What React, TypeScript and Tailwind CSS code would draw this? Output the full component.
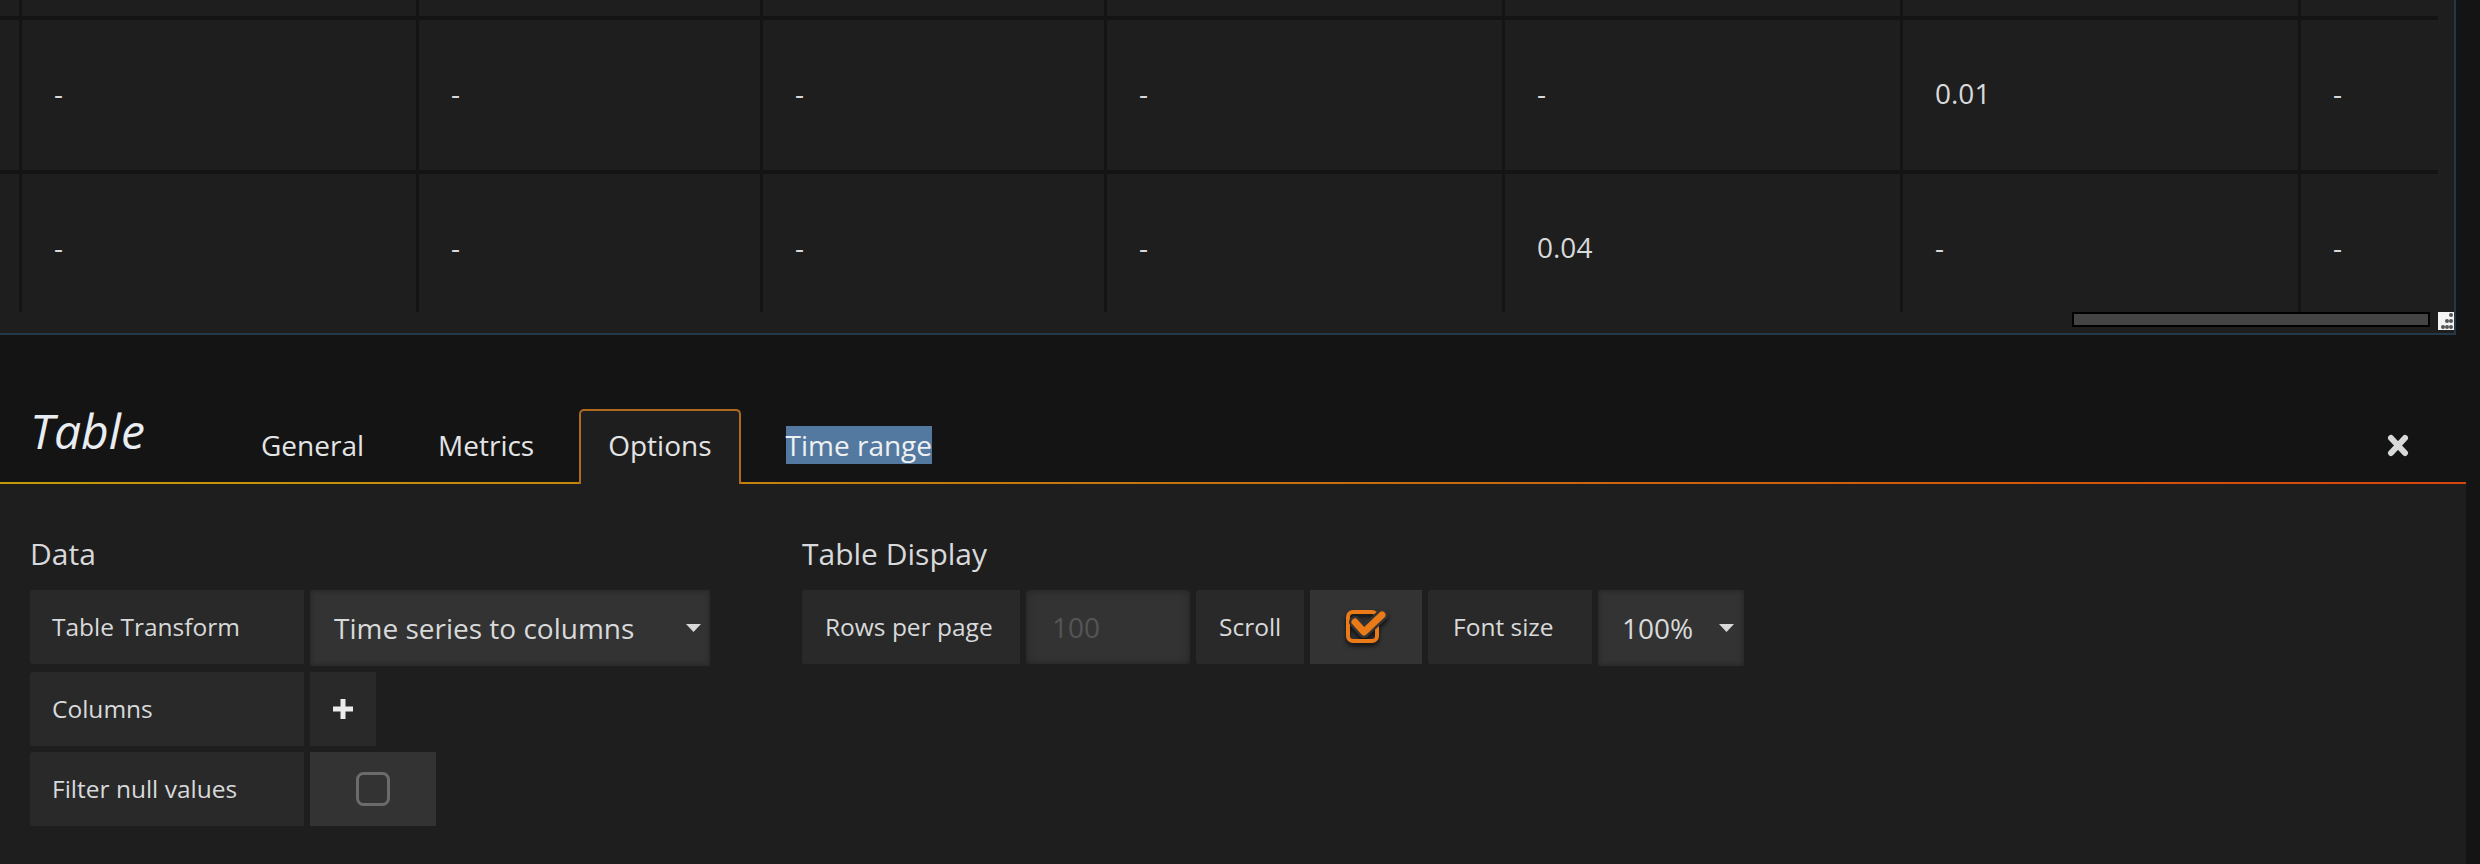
import React from "react";

const colWidths = [19, 397, 344, 344, 398, 398, 398, 140];

const rows = [
	["", "", "", "", "", "", "", ""],
	["", "-", "-", "-", "-", "-", "0.01", "-"],
	["", "-", "-", "-", "-", "0.04", "-", "-"],
];

function Caret() {
	return (
		<svg width="15" height="8" viewBox="0 0 15 8">
			<path d="M0 0 L15 0 L7.5 8 Z" fill="#d8d9da" />
		</svg>
	);
}

function TableRow({ cells, first }: { cells: string[]; first?: boolean }) {
	return (
		<div
			className={
				first
					? "flex h-[16px] shrink-0"
					: "flex h-[154px] shrink-0 border-t-4 border-[#141414]"
			}
		>
			{cells.map((c, i) => (
				<div
					key={i}
					style={{ width: colWidths[i] }}
					className={
						i === 0
							? "shrink-0"
							: "shrink-0 border-l-[3px] border-[#141414] pl-[32px] pt-[53px] text-[28px] leading-[40px] text-[#d8d9da]"
					}
				>
					{first ? "" : c}
				</div>
			))}
		</div>
	);
}

function Label({ text, w, pl }: { text: string; w: string; pl: string }) {
	return (
		<div
			className={`flex h-[74px] shrink-0 items-center rounded-l-[3px] bg-[#292929] text-[24.5px] text-[#d8d9da] ${w} ${pl}`}
		>
			{text}
		</div>
	);
}

export default function App() {
	return (
		<div
			className="h-[864px] w-full overflow-hidden bg-[#141414]"
			style={{ fontFamily: '"Open Sans", "Noto Sans", sans-serif' }}
		>
			{/* panel */}
			<div className="flex h-[335px] w-[2456px] flex-col border-r-2 border-b-2 border-[#233849] bg-[#1f1e1f]">
				<div className="flex h-[312px] w-[2438px] flex-col overflow-hidden">
					{rows.map((r, i) => (
						<TableRow key={i} cells={r} first={i === 0} />
					))}
				</div>
				<div className="flex h-[21px] items-start justify-end">
					<div className="h-[15px] w-[358px] border-2 border-black bg-[#444]" />
					<div className="ml-[8px] h-[18px] w-[16px]">
						<svg width="16" height="18" viewBox="0 0 16 18">
							<rect x="0" y="0" width="16" height="18" fill="#f4f4f4" />
							<circle cx="13" cy="3" r="2" fill="#555" />
							<circle cx="9" cy="9" r="2" fill="#555" />
							<circle cx="13" cy="9" r="2" fill="#555" />
							<circle cx="5" cy="15" r="2" fill="#555" />
							<circle cx="9" cy="15" r="2" fill="#555" />
							<circle cx="13" cy="15" r="2" fill="#555" />
						</svg>
					</div>
				</div>
			</div>

			{/* editor header */}
			<div className="flex h-[147px] w-[2466px] items-end">
				<div className="w-[232px] pb-[27px] pl-[30px] text-[48px] italic leading-[48px] text-[#e9edf2]">
					Table
				</div>
				<div className="flex items-end gap-[16px] text-[28px] leading-[40px] text-[#e3e4e5]">
					<div className="px-[29px] pt-[16px] pb-[17px]">General</div>
					<div className="px-[29px] pt-[16px] pb-[17px]">Metrics</div>
					<div className="relative z-10 -mb-[2px] rounded-t-[5px] border-2 border-b-0 border-[#b06a1f] bg-[#1f1e1f] px-[27px] pt-[14px] pb-[19px]">
						Options
					</div>
					<div className="px-[29px] pt-[16px] pb-[17px]">
						<span className="bg-[#5479a0] text-[#eef0f2]">Time range</span>
					</div>
				</div>
				<div className="mr-[57px] mb-[25px] ml-auto">
					<svg width="22" height="23" viewBox="0 0 22 23">
						<path
							d="M4 4 L18 19 M18 4 L4 19"
							stroke="#d8d9da"
							strokeWidth="6"
							strokeLinecap="round"
						/>
					</svg>
				</div>
			</div>
			<div className="h-[2px] w-[2466px] bg-gradient-to-r from-[#c49a0a] via-[#c4720f] to-[#d8450c]" />

			{/* options content */}
			<div className="flex h-[380px] w-[2466px] bg-[#1f1e1f] pt-[52px] pl-[30px]">
				<div className="w-[772px]">
					<div className="mb-[18px] text-[30px] leading-[36px] text-[#d8d9da]">Data</div>
					<div className="flex flex-col">
						<div className="flex h-[74px] items-start gap-[6px]">
							<Label text="Table Transform" w="w-[274px]" pl="pl-[22px]" />
							<div className="flex h-[76px] w-[400px] items-center justify-between bg-[#333] pr-[9px] pl-[24px] text-[28px] text-[#d8d9da] shadow-[inset_0_0_6px_rgba(0,0,0,0.35)]">
								<span>Time series to columns</span>
								<Caret />
							</div>
						</div>
						<div className="mt-[8px] flex gap-[6px]">
							<Label text="Columns" w="w-[274px]" pl="pl-[22px]" />
							<div className="flex h-[74px] w-[66px] items-center justify-center bg-[#292929]">
								<svg width="20" height="20" viewBox="0 0 20 20">
									<path d="M10 0 V20 M0 10 H20" stroke="#ececec" strokeWidth="5" />
								</svg>
							</div>
						</div>
						<div className="mt-[6px] flex gap-[6px]">
							<Label text="Filter null values" w="w-[274px]" pl="pl-[22px]" />
							<div className="flex h-[74px] w-[126px] items-center justify-center bg-[#333]">
								<svg width="34" height="34" viewBox="0 0 34 34">
									<rect
										x="1.5"
										y="1.5"
										width="31"
										height="31"
										rx="6"
										fill="none"
										stroke="#6b6b6b"
										strokeWidth="3"
									/>
								</svg>
							</div>
						</div>
					</div>
				</div>
				<div>
					<div className="mb-[18px] text-[30px] leading-[36px] text-[#d8d9da]">Table Display</div>
					<div className="flex h-[74px] items-start gap-[6px]">
						<Label text="Rows per page" w="w-[218px]" pl="pl-[23px]" />
						<div className="flex h-[74px] w-[164px] items-center rounded-[3px] bg-[#333] pl-[26px] text-[28px] text-[#555] shadow-[inset_0_0_8px_rgba(0,0,0,0.35)]">
							100
						</div>
						<Label text="Scroll" w="w-[108px]" pl="pl-[23px]" />
						<div className="flex h-[74px] w-[112px] items-center justify-center bg-[#333]">
							<svg
								width="46"
								height="40"
								viewBox="0 0 46 40"
								className="drop-shadow-[0_3px_2px_rgba(0,0,0,0.7)]"
							>
								<rect
									x="5"
									y="5"
									width="29"
									height="29"
									rx="5"
									fill="none"
									stroke="#eb7b18"
									strokeWidth="4"
								/>
								<polyline
									points="12,15 21,25 39,8"
									fill="none"
									stroke="#333"
									strokeWidth="12"
									strokeLinecap="round"
									strokeLinejoin="round"
								/>
								<polyline
									points="12,15 21,25 39,8"
									fill="none"
									stroke="#eb7b18"
									strokeWidth="7"
									strokeLinecap="round"
									strokeLinejoin="round"
								/>
							</svg>
						</div>
						<Label text="Font size" w="w-[164px]" pl="pl-[25px]" />
						<div className="flex h-[76px] w-[146px] items-center justify-between bg-[#333] pr-[10px] pl-[24px] text-[28px] text-[#d8d9da] shadow-[inset_0_0_6px_rgba(0,0,0,0.35)]">
							<span>100%</span>
							<Caret />
						</div>
					</div>
				</div>
			</div>
		</div>
	);
}
